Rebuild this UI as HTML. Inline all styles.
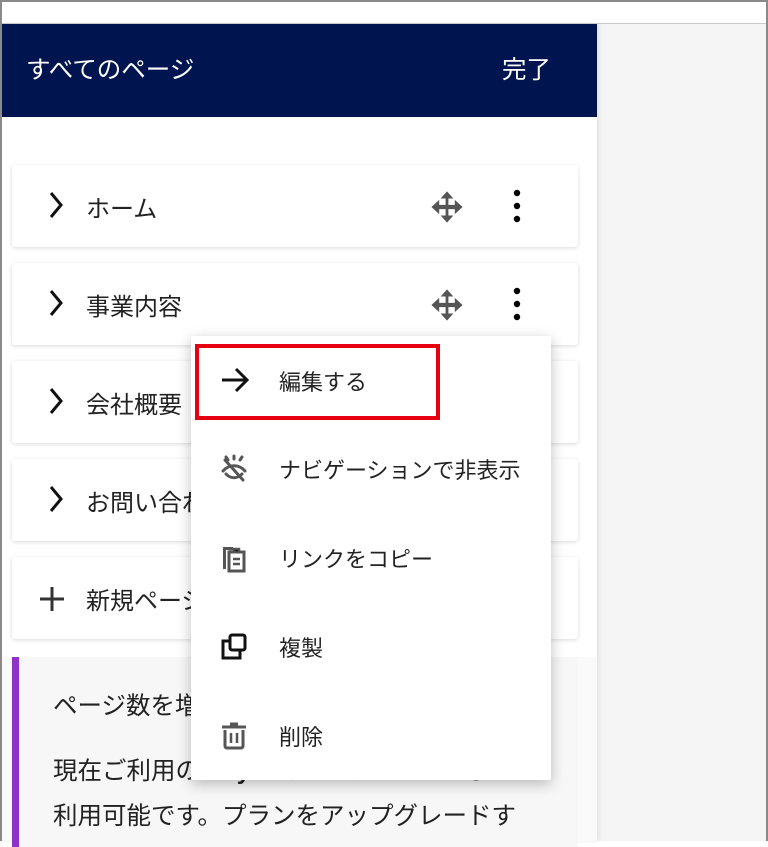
<!DOCTYPE html>
<html><head><meta charset="utf-8"><style>
*{margin:0;padding:0;box-sizing:border-box}
body{width:768px;height:841px;overflow:hidden;background:#fff;font-family:"Liberation Sans","Noto Sans CJK JP",sans-serif;position:relative}
.frame{position:absolute;inset:0;border:2px solid #8a8a8a;border-bottom:none;pointer-events:none;z-index:10}
.topline{position:absolute;left:0;right:0;top:23px;height:1px;background:#c8c8c8}
.right{position:absolute;left:597px;top:24px;right:0;bottom:0;background:#f5f5f5}
.panel{position:absolute;left:2px;top:24px;width:595px;bottom:0;background:#fafafa;box-shadow:2px 0 4px rgba(0,0,0,.08)}
.hdr{position:absolute;left:2px;top:24px;width:595px;height:93px;background:#001450;color:#fff;font-size:24.5px}
.hdr .t{position:absolute;left:24px;top:27px}
.hdr .d{position:absolute;right:46px;top:27px}
.white{position:absolute;left:2px;top:117px;width:595px;height:540px;background:#fff}
.card{position:absolute;left:12px;width:566px;height:82px;background:#fff;border-radius:3px;box-shadow:0 1px 4px rgba(0,0,0,.15)}
.card .lbl{position:absolute;left:74px;top:24px;font-size:24px;color:#222}
.chev{position:absolute;left:36px;top:26px}
.move{position:absolute;left:418px;top:25px}
.dots{position:absolute;left:500px;top:24px}
.info{position:absolute;left:12px;top:657px;width:566px;height:190px;background:#f7f7f7}
.info .bar{position:absolute;left:0;top:0;width:7px;height:100%;background:#8e33c8}
.info p{position:absolute;left:41px;font-size:24.5px;color:#222;white-space:nowrap}
.menu{position:absolute;left:191px;top:336px;width:360px;height:444px;background:#fff;box-shadow:0 4px 14px rgba(0,0,0,.25);border-radius:2px}
.mi{position:absolute;left:0;width:360px;height:88px}
.mi svg{position:absolute;left:28px;top:30px}
.mi span{position:absolute;left:88px;top:29px;font-size:22px;color:#222}
.red{position:absolute;left:195px;top:344px;width:245px;height:76px;border:4px solid #e60012;z-index:5}
</style></head><body>
<div class="right"></div>
<div class="panel"></div>
<div class="white"></div>
<div class="topline"></div>
<div class="hdr"><span class="t">すべてのページ</span><span class="d">完了</span></div>

<div class="card" style="top:165px"><svg class="chev" width="16" height="28" viewBox="0 0 16 28"><path d="M3 2 L13 14 L3 26" stroke="#111" stroke-width="3" fill="none"/></svg><span class="lbl">ホーム</span>
<svg class="move" width="34" height="34" viewBox="0 0 24 24"><path fill="#555" d="M12 1l-4.5 5h3.5v4.5H6.5V7L1 12l5.5 5v-3.5H11V18H7.5l4.5 5 4.5-5H13v-4.5h4.5V17l5.5-5-5.5-5v3.5H13V6h3.5z"/></svg>
<svg class="dots" width="10" height="34" viewBox="0 0 10 34"><circle cx="5" cy="4" r="3.2"/><circle cx="5" cy="17" r="3.2"/><circle cx="5" cy="30" r="3.2"/></svg></div>

<div class="card" style="top:263px"><svg class="chev" width="16" height="28" viewBox="0 0 16 28"><path d="M3 2 L13 14 L3 26" stroke="#111" stroke-width="3" fill="none"/></svg><span class="lbl">事業内容</span>
<svg class="move" width="34" height="34" viewBox="0 0 24 24"><path fill="#555" d="M12 1l-4.5 5h3.5v4.5H6.5V7L1 12l5.5 5v-3.5H11V18H7.5l4.5 5 4.5-5H13v-4.5h4.5V17l5.5-5-5.5-5v3.5H13V6h3.5z"/></svg>
<svg class="dots" width="10" height="34" viewBox="0 0 10 34"><circle cx="5" cy="4" r="3.2"/><circle cx="5" cy="17" r="3.2"/><circle cx="5" cy="30" r="3.2"/></svg></div>

<div class="card" style="top:361px"><svg class="chev" width="16" height="28" viewBox="0 0 16 28"><path d="M3 2 L13 14 L3 26" stroke="#111" stroke-width="3" fill="none"/></svg><span class="lbl">会社概要</span></div>
<div class="card" style="top:459px"><svg class="chev" width="16" height="28" viewBox="0 0 16 28"><path d="M3 2 L13 14 L3 26" stroke="#111" stroke-width="3" fill="none"/></svg><span class="lbl">お問い合わせ</span></div>
<div class="card" style="top:557px"><svg style="position:absolute;left:26px;top:28px" width="28" height="28" viewBox="0 0 28 28"><path d="M14 2v24M2 14h24" stroke="#333" stroke-width="3"/></svg><span class="lbl">新規ページ</span></div>

<div class="info"><div class="bar"></div>
<p style="top:30px">ページ数を増やすには</p>
<p style="top:95px">現在ご利用の<b>Play</b> プランでは5ページまで</p>
<p style="top:140px">利用可能です。プランをアップグレードす</p></div>

<div class="menu">
<div class="mi" style="top:0"><svg width="32" height="28" viewBox="0 0 32 28"><path d="M3 14h25M17 3l11 11-11 11" stroke="#111" stroke-width="3" fill="none"/></svg><span>編集する</span></div>
<div class="mi" style="top:88px"><svg width="30" height="30" viewBox="0 0 30 30"><path d="M4 17c6-7 16-7 22 0M7 20c5 5 11 5 16 0M6 6l18 20M9 6l-2-3M15 5V2M21 6l2-3" stroke="#555" stroke-width="3" fill="none" stroke-linecap="round"/></svg><span>ナビゲーションで非表示</span></div>
<div class="mi" style="top:177px"><svg width="30" height="32" viewBox="0 0 30 32"><path d="M4 4h10v3H7v19H4z" fill="#555"/><rect x="10" y="9" width="15" height="19" stroke="#555" stroke-width="3" fill="none"/><path d="M10 6h10v3M14 16h7M14 21h7" stroke="#555" stroke-width="2.5"/></svg><span>リンクをコピー</span></div>
<div class="mi" style="top:266px"><svg width="30" height="30" viewBox="0 0 30 30"><rect x="11" y="3" width="15" height="15" rx="2" stroke="#111" stroke-width="3" fill="none"/><path d="M11 9H4v17h17v-8" stroke="#111" stroke-width="3" fill="none"/></svg><span>複製</span></div>
<div class="mi" style="top:355px"><svg width="30" height="30" viewBox="0 0 30 30"><path d="M3 6h24M11 3h8" stroke="#555" stroke-width="3"/><path d="M6 9v16a2 2 0 0 0 2 2h14a2 2 0 0 0 2-2V9" stroke="#555" stroke-width="3" fill="none"/><path d="M12 12v10M18 12v10" stroke="#555" stroke-width="2.5"/></svg><span>削除</span></div>
</div>
<div class="red"></div>
<div class="frame"></div>
</body></html>
